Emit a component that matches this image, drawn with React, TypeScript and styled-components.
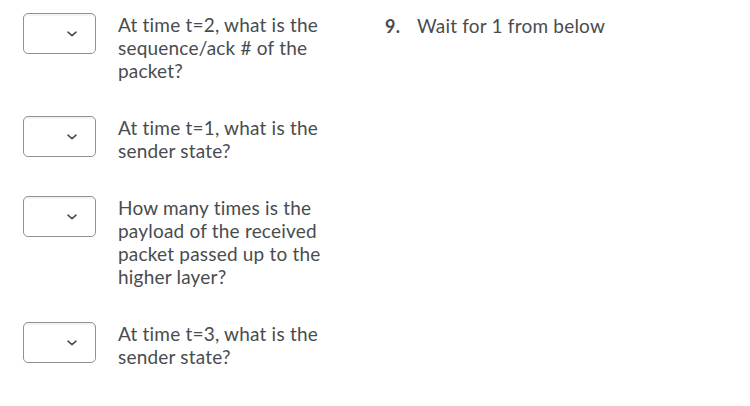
import React from "react";
import styled, { createGlobalStyle } from "styled-components";

const GlobalStyle = createGlobalStyle`
  html, body {
    margin: 0;
    padding: 0;
    background: #ffffff;
  }
  body {
    font-family: Lato, "Open Sans", "Liberation Sans", sans-serif;
    color: #494c4e;
  }
`;

const Page = styled.div`
  display: flex;
  align-items: flex-start;
  width: 750px;
  height: 406px;
  box-sizing: border-box;
  padding: 13px 0 0 23px;
`;

const Questions = styled.div`
  display: flex;
  flex-direction: column;
  gap: 34px;
  width: 362px;
`;

const Row = styled.div`
  display: flex;
  align-items: flex-start;
  gap: 22px;
`;

const SelectBox = styled.div`
  flex: none;
  width: 73px;
  height: 41px;
  box-sizing: border-box;
  border: 1px solid #8f9194;
  border-radius: 5px;
  background: #ffffff;
  box-shadow: inset 0 2px 0 0 #f2f4f6;
  display: flex;
  align-items: center;
  justify-content: flex-end;
  padding-right: 18px;
`;

const Prompt = styled.div`
  font-size: 19px;
  line-height: 23px;
  letter-spacing: 0.2px;
  width: 218px;
`;

const Answers = styled.div`
  display: flex;
  align-items: baseline;
  font-size: 19px;
  line-height: 23px;
  letter-spacing: 0.2px;
  margin-top: 1px;
`;

const Number = styled.span`
  font-weight: 700;
  width: 32px;
  font-size: 18px;
`;

const Chevron = () => (
  <svg width="10" height="6" viewBox="0 0 10 6" aria-hidden="true">
    <path d="M1 1.2 L5 4.6 L9 1.2" fill="none" stroke="#494c4e" strokeWidth="1.6" strokeLinecap="round" strokeLinejoin="round" />
  </svg>
);

const questions = [
  "At time t=2, what is the sequence/ack # of the packet?",
  "At time t=1, what is the sender state?",
  "How many times is the payload of the received packet passed up to the higher layer?",
  "At time t=3, what is the sender state?",
];

export default function App() {
  return (
    <>
      <GlobalStyle />
      <Page>
        <Questions>
          {questions.map((q) => (
            <Row key={q}>
              <SelectBox>
                <Chevron />
              </SelectBox>
              <Prompt>{q}</Prompt>
            </Row>
          ))}
        </Questions>
        <Answers>
          <Number>9.</Number>
          <span>Wait for 1 from below</span>
        </Answers>
      </Page>
    </>
  );
}
